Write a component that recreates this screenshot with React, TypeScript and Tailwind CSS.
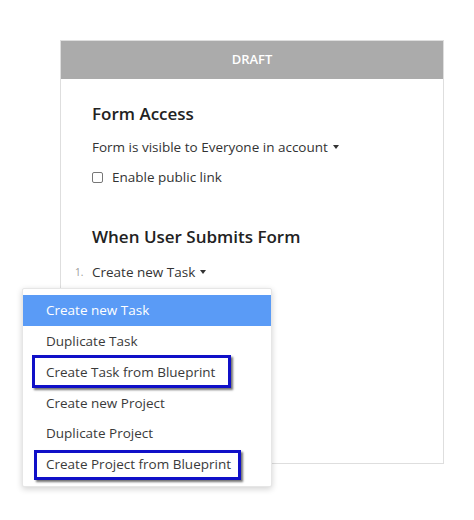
import React from 'react';

const menuItems = [
    'Create new Task',
    'Duplicate Task',
    'Create Task from Blueprint',
    'Create new Project',
    'Duplicate Project',
    'Create Project from Blueprint',
];

function Caret() {
    return <span className="ml-[5px] inline-block border-x-[3px] border-t-[4px] border-x-transparent border-t-[#333]" />;
}

export default function App() {
    return (
        <div className="relative w-[474px] h-[520px] bg-white pt-[40px] pl-[60px] font-['Open_Sans',sans-serif] text-[#333]">
            {/* Form card */}
            <div className="w-[384px] h-[424px] border border-[#dedede] bg-white flex flex-col">
                <div className="h-[38px] bg-[#ababab] flex items-center justify-center text-white text-[13px] font-semibold">
                    DRAFT
                </div>
                <div className="pl-[31px] pt-[23px] flex flex-col">
                    <h2 className="text-[17px] leading-[24px] font-semibold text-[#222]">Form Access</h2>
                    <div className="mt-[11px] text-[13.5px] leading-[20px] flex items-center">
                        Form is visible to Everyone in account
                        <Caret />
                    </div>
                    <label className="mt-[10px] flex items-center gap-[9px] text-[13.5px] leading-[20px]">
                        <span className="w-[11px] h-[11px] border border-[#777] rounded-[2px]" />
                        Enable public link
                    </label>
                    <h2 className="mt-[38px] text-[17px] leading-[24px] font-semibold text-[#222]">When User Submits Form</h2>
                    <div className="mt-[13px] -ml-[17px] flex items-center text-[13.5px] leading-[20px]">
                        <span className="text-[10px] text-[#999] w-[17px]">1.</span>
                        Create new Task
                        <Caret />
                    </div>
                </div>
            </div>

            {/* Dropdown menu */}
            <div className="absolute left-[22px] top-[288px] w-[250px] h-[199px] bg-white rounded-[2px] border border-[#e6e6e6] shadow-[0_2px_6px_rgba(0,0,0,0.18)] pt-[6px] flex flex-col">
                {menuItems.map((item, i) => (
                    <div
                        key={item}
                        className={
                            i === 0
                                ? 'h-[30.8px] pl-[23px] flex items-center text-[13.5px] bg-[#5a9bf6] text-white'
                                : 'h-[30.8px] pl-[23px] flex items-center text-[13.5px] text-[#3a3a3a]'
                        }
                    >
                        {item}
                    </div>
                ))}
                {/* annotation boxes */}
                <div className="absolute left-[9px] top-[66px] w-[199px] h-[33px] border-[3px] border-[#1010c8] shadow-[2px_2px_2px_rgba(0,0,0,0.55)]" />
                <div className="absolute left-[11px] top-[161px] w-[207px] h-[30px] border-[3px] border-[#1010c8] shadow-[2px_2px_2px_rgba(0,0,0,0.55)]" />
            </div>
        </div>
    );
}
